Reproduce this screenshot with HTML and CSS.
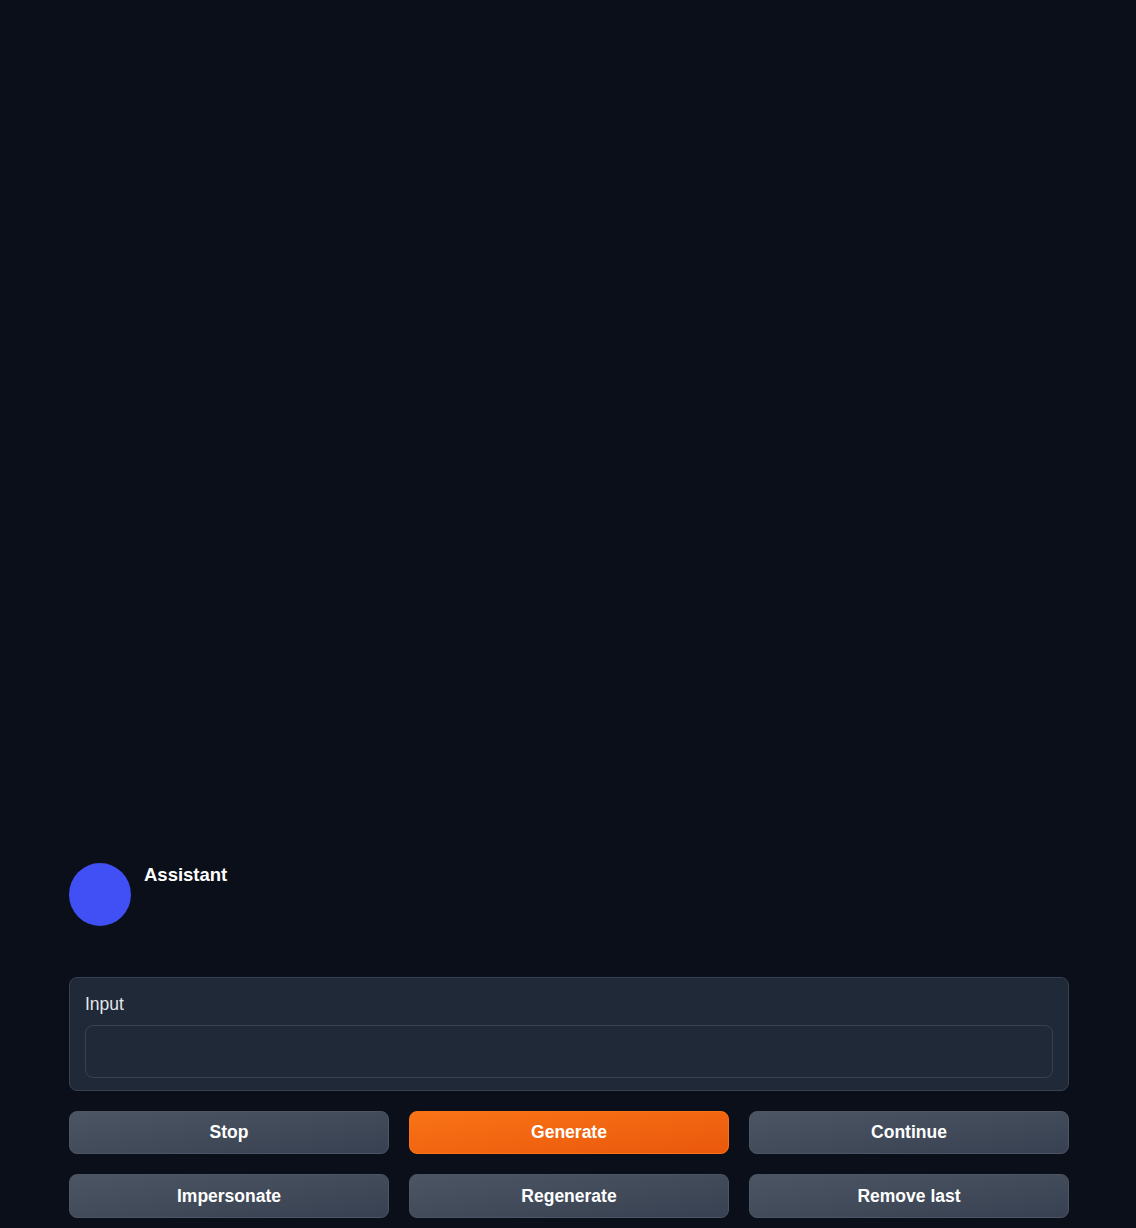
FILE: index.html
```html
<!DOCTYPE html>
<html>
<head>
<meta charset="utf-8">
<link rel="stylesheet" href="styles.css">
</head>
<body>
<div class="page">
  <div class="chat">
    <div class="message">
      <div class="avatar"></div>
      <div class="name">Assistant</div>
    </div>
  </div>
  <div class="input-block">
    <label class="label">Input</label>
    <textarea class="textarea"></textarea>
  </div>
  <div class="buttons">
    <button class="btn">Stop</button>
    <button class="btn primary">Generate</button>
    <button class="btn">Continue</button>
    <button class="btn">Impersonate</button>
    <button class="btn">Regenerate</button>
    <button class="btn">Remove last</button>
  </div>
</div>
</body>
</html>
```
FILE: styles.css
```css
html, body {
  margin: 0;
  padding: 0;
  background: #0b0f19;
  font-family: "Liberation Sans", Arial, sans-serif;
  color: #f3f4f6;
}
.page {
  box-sizing: border-box;
  height: 1228px;
  width: 1000px;
  margin-left: 69px;
  display: flex;
  flex-direction: column;
  justify-content: flex-end;
  padding-bottom: 10px;
}
.chat {
  flex: 1;
  display: flex;
  flex-direction: column;
  justify-content: flex-end;
  padding-bottom: 51px;
}
.message {
  display: flex;
  align-items: flex-start;
  gap: 13px;
}
.avatar {
  width: 62px;
  height: 63px;
  border-radius: 50%;
  background: #4150f5;
  flex: none;
}
.name {
  font-weight: bold;
  font-size: 18.5px;
  line-height: 24px;
  color: #ffffff;
}
.input-block {
  box-sizing: border-box;
  background: #1f2937;
  border: 1px solid #374151;
  border-radius: 8px;
  padding: 14px 15px 12px;
  display: flex;
  flex-direction: column;
}
.label {
  font-size: 17.5px;
  line-height: 24px;
  color: #e5e7eb;
  margin-bottom: 9px;
}
.textarea {
  box-sizing: border-box;
  height: 53px;
  background: #1f2937;
  border: 1px solid #374151;
  border-radius: 8px;
  resize: none;
  outline: none;
  color: #f3f4f6;
  font-family: inherit;
}
.buttons {
  margin-top: 20px;
  display: grid;
  grid-template-columns: repeat(3, 1fr);
  grid-template-rows: 43px 44px;
  gap: 20px;
}
.btn {
  box-sizing: border-box;
  height: 100%;
  border: 1px solid #4b5563;
  border-radius: 8px;
  background: linear-gradient(to bottom right, #4b5563, #374151);
  color: #ffffff;
  font-family: inherit;
  font-weight: bold;
  font-size: 17.5px;
  padding: 0;
}
.btn.primary {
  border-color: #f97316;
  background: linear-gradient(to bottom right, #f97316, #ea580c);
}
```
